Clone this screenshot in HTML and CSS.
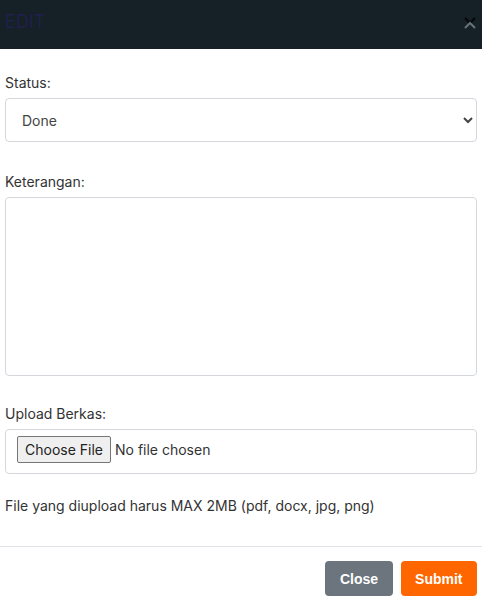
FILE: index.html
```html
<!DOCTYPE html>
<html lang="id">
<head>
<meta charset="utf-8">
<title>EDIT</title>
<link rel="stylesheet" href="styles.css">
</head>
<body>
<div class="modal">
  <div class="modal-header">
    <h5 class="modal-title">EDIT</h5>
    <button class="btn-close" type="button" aria-label="Close">
      <svg width="12" height="12" viewBox="0 0 12 12">
        <path d="M1 1 L6 6 L11 1" stroke="#05080a" stroke-width="2" fill="none"/>
        <path d="M1 11 L6 6 L11 11" stroke="#6a7176" stroke-width="2" fill="none"/>
      </svg>
    </button>
  </div>
  <div class="modal-body">
    <div class="group group-status">
      <label class="label">Status:</label>
      <select class="control select">
        <option>Done</option>
      </select>
    </div>
    <div class="group group-ket">
      <label class="label">Keterangan:</label>
      <textarea class="control textarea"></textarea>
    </div>
    <div class="group group-file">
      <label class="label">Upload Berkas:</label>
      <input class="control file" type="file">
    </div>
    <p class="help">File yang diupload harus MAX 2MB (pdf, docx, jpg, png)</p>
  </div>
  <div class="modal-footer">
    <button class="btn btn-secondary" type="button">Close</button>
    <button class="btn btn-primary" type="button">Submit</button>
  </div>
</div>
</body>
</html>
```
FILE: styles.css
```css
* { box-sizing: border-box; }
html, body {
  margin: 0;
  padding: 0;
  background: #ffffff;
}
body {
  font-family: Inter, "Noto Sans", sans-serif;
  font-size: 14px;
  line-height: 21px;
  color: #333333;
}
.modal {
  width: 482px;
}
.modal-header {
  height: 49px;
  background: #162027;
  display: flex;
  align-items: center;
  justify-content: space-between;
  padding: 0 6px 6px 5px;
}
.modal-title {
  margin: 0;
  font-size: 18px;
  font-weight: 400;
  line-height: 24px;
  color: #211f4c;
}
.btn-close {
  border: 0;
  background: transparent;
  padding: 0;
  width: 12px;
  height: 12px;
  display: flex;
  margin-top: 2px;
}
.modal-body {
  padding: 23px 5px 30px 5px;
}
.group { display: flex; flex-direction: column; }
.group-status { margin-bottom: 29px; }
.group-ket { margin-bottom: 27px; }
.group-file { margin-bottom: 21px; }
.label {
  display: block;
  margin-bottom: 5px;
  color: #333333;
}
.control {
  display: block;
  width: 100%;
  border: 1px solid #d4d8dc;
  border-radius: 4px;
  background: #ffffff;
  font-family: Inter, "Noto Sans", sans-serif;
  font-size: 14px;
  color: #444444;
}
.select {
  height: 44px;
  padding: 0 8px 0 12px;
}
.textarea {
  height: 179px;
  resize: none;
  padding: 8px 12px;
}
.file {
  height: 45px;
  padding: 6px 11px;
  color: #333333;
}
.file::file-selector-button {
  font-family: Inter, "Noto Sans", sans-serif;
  font-size: 14px;
  height: 27px;
  padding: 0 7px;
  margin-right: 4px;
  border: 1px solid #767676;
  border-radius: 2px;
  background: #efefef;
  color: #222222;
}
.help {
  margin: 0;
  color: #333333;
}
.modal-footer {
  border-top: 1px solid #dee2e6;
  display: flex;
  justify-content: flex-end;
  gap: 8px;
  padding: 14px 5px 7px 5px;
}
.btn {
  height: 35px;
  padding: 0 14.5px;
  border: 0;
  border-radius: 4px;
  font-family: "Liberation Sans", Arial, sans-serif;
  font-weight: 700;
  font-size: 14px;
  color: #ffffff;
}
.btn-secondary { background: #6c757d; }
.btn-primary { background: #ff6600; }
```
